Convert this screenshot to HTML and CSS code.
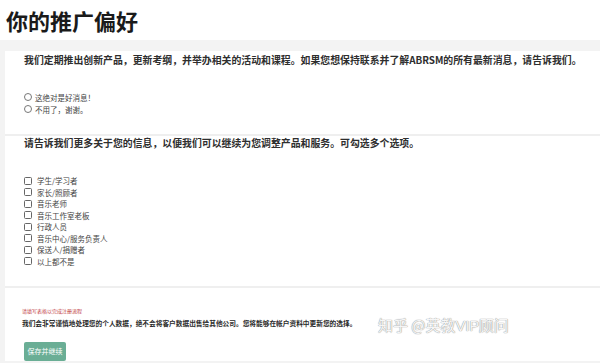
FILE: index.html
```html
<!DOCTYPE html>
<html lang="zh-CN">
<head>
<meta charset="utf-8">
<title>你的推广偏好</title>
<link rel="stylesheet" href="styles.css">
</head>
<body>
<h1 class="title">你的推广偏好</h1>
<div class="page">
  <section class="card first">
    <p class="question">我们定期推出创新产品，更新考纲，并举办相关的活动和课程。如果您想保持联系并了解ABRSM的所有最新消息，请告诉我们。</p>
    <ul class="options radios">
      <li><span class="radio"></span>这绝对是好消息！</li>
      <li><span class="radio"></span>不用了，谢谢。</li>
    </ul>
  </section>
  <section class="card second">
    <p class="question">请告诉我们更多关于您的信息，以便我们可以继续为您调整产品和服务。可勾选多个选项。</p>
    <ul class="options checks">
      <li><span class="check"></span>学生/学习者</li>
      <li><span class="check"></span>家长/照顾者</li>
      <li><span class="check"></span>音乐老师</li>
      <li><span class="check"></span>音乐工作室老板</li>
      <li><span class="check"></span>行政人员</li>
      <li><span class="check"></span>音乐中心/服务负责人</li>
      <li><span class="check"></span>保送人/捐赠者</li>
      <li><span class="check"></span>以上都不是</li>
    </ul>
  </section>
  <section class="card footer">
    <p class="warn">请填写表格以完成注册流程</p>
    <p class="privacy">我们会非常谨慎地处理您的个人数据，绝不会将客户数据出售给其他公司。您将能够在帐户资料中更新您的选择。</p>
    <button class="save" type="button">保存并继续</button>
    <div class="watermark">知乎 @英教<span class="latin">VIP</span>顾问</div>
  </section>
</div>
</body>
</html>
```

FILE: styles.css
```css
html, body {
  margin: 0;
  padding: 0;
}
body {
  width: 600px;
  height: 363px;
  overflow: hidden;
  background: #ffffff;
  font-family: "Noto Sans CJK TC", "Noto Sans CJK SC", "Noto Sans", "Liberation Sans", sans-serif;
  color: #333;
}
.title {
  margin: 0;
  padding: 7px 6px;
  font-size: 22px;
  line-height: 26px;
  font-weight: 700;
  color: #1a1a1a;
  font-family: "Noto Sans CJK SC", "Noto Sans", sans-serif;
}
.page {
  background: #f3f3f3;
  padding: 11px 0 2px 5px;
}
.card {
  background: #ffffff;
  padding-left: 19px;
}
.card.first {
  padding-top: 2px;
  padding-bottom: 19px;
}
.card.second {
  border-top: 2px solid #efefef;
  padding-bottom: 19px;
}
.question {
  margin: 0;
  font-size: 9.9px;
  line-height: 14px;
  font-weight: 700;
  color: #2e2e2e;
  white-space: nowrap;
}
.options {
  list-style: none;
  margin: 24px 0 0;
  padding: 0;
  font-size: 7.5px;
  color: #444;
}
.radios li {
  display: flex;
  align-items: center;
  height: 12px;
}
.checks {
  margin-top: 25px;
}
.checks li {
  display: flex;
  align-items: center;
  height: 11.5px;
}
.radio {
  width: 6px;
  height: 6px;
  border: 1px solid #777;
  border-radius: 50%;
  margin-right: 3px;
  flex: none;
}
.check {
  width: 6px;
  height: 6px;
  border: 1px solid #666;
  border-radius: 1.5px;
  margin-right: 5px;
  flex: none;
}
.card.footer {
  position: relative;
  border-top: 2px solid #efefef;
  padding-top: 19px;
  padding-left: 17px;
  height: 54px;
}
.warn {
  margin: 0;
  font-size: 5px;
  line-height: 8px;
  color: #c0393b;
}
.privacy {
  margin: 3px 0 0;
  font-size: 6.7px;
  line-height: 10px;
  font-weight: 700;
  color: #2a2a2a;
  white-space: nowrap;
}
.save {
  display: block;
  margin: 14px 0 0 2px;
  width: 42px;
  height: 19px;
  padding: 0;
  border: none;
  border-radius: 2px;
  background: #6aae95;
  color: #ffffff;
  font-family: inherit;
  font-size: 7px;
  line-height: 19px;
}
.watermark {
  position: absolute;
  left: 373px;
  top: 26px;
  font-size: 15px;
  line-height: 22px;
  font-weight: 400;
  color: #f6f6f6;
  text-shadow: 0 0 1px #9a9a9a, 0 0 1px #9a9a9a;
  white-space: nowrap;
}
.latin {
  font-family: "Liberation Sans Narrow", "Liberation Sans", sans-serif;
  letter-spacing: -0.3px;
}
```
